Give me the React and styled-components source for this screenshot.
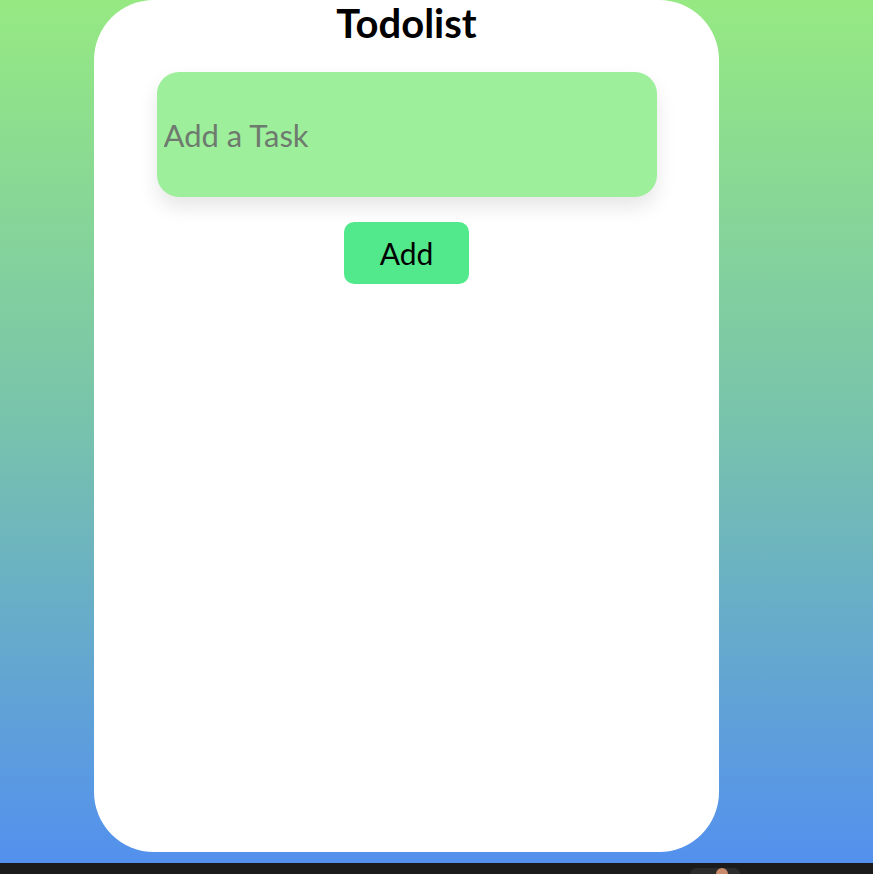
import React from "react";
import styled, { createGlobalStyle } from "styled-components";

const Global = createGlobalStyle`
  html, body { margin: 0; padding: 0; }
  body { font-family: "Lato", "Open Sans", sans-serif; overflow: hidden; }
`;

const Page = styled.div`
  width: 873px;
  height: 874px;
  display: flex;
  flex-direction: column;
`;

const Stage = styled.div`
  height: 863px;
  background: linear-gradient(to bottom, #96e982 0%, #77c2ad 50%, #5390ee 100%);
  padding-left: 94px;
  box-sizing: border-box;
`;

const Card = styled.div`
  width: 625px;
  height: 852px;
  background: #ffffff;
  border-radius: 60px;
  display: flex;
  flex-direction: column;
  align-items: center;
`;

const Title = styled.h1`
  margin: 0;
  font-family: "Lato", sans-serif;
  font-weight: 700;
  font-size: 40px;
  line-height: 46px;
  color: #000;
`;

const TaskInput = styled.input`
  margin-top: 26px;
  width: 500px;
  height: 125px;
  box-sizing: border-box;
  border: none;
  outline: none;
  border-radius: 22px;
  background: #9def9b;
  box-shadow: 0 10px 20px rgba(0, 0, 0, 0.1);
  padding: 0 7px;
  font-family: "Lato", sans-serif;
  font-size: 31px;
  color: #222;
  &::placeholder { color: #6f7a6f; }
`;

const AddButton = styled.button`
  margin-top: 25px;
  width: 125px;
  height: 62px;
  border: none;
  border-radius: 10px;
  background: #52e98c;
  font-family: "Lato", sans-serif;
  font-size: 30px;
  color: #000;
  cursor: pointer;
`;

const Taskbar = styled.div`
  height: 11px;
  background: #1b1b1b;
  display: flex;
  align-items: flex-end;
  padding-left: 690px;
`;

const TaskItem = styled.div`
  width: 50px;
  height: 6px;
  background: #2b2b2b;
  border-radius: 6px 6px 0 0;
  display: flex;
  justify-content: center;
  padding-left: 14px;
  box-sizing: border-box;
`;

const Avatar = styled.div`
  width: 12px;
  height: 6px;
  border-radius: 6px 6px 0 0;
  background: #c98a6a;
`;

export default function App() {
  return (
    <Page>
      <Global />
      <Stage>
        <Card>
          <Title>Todolist</Title>
          <TaskInput placeholder="Add a Task" />
          <AddButton>Add</AddButton>
        </Card>
      </Stage>
      <Taskbar>
        <TaskItem>
          <Avatar />
        </TaskItem>
      </Taskbar>
    </Page>
  );
}
